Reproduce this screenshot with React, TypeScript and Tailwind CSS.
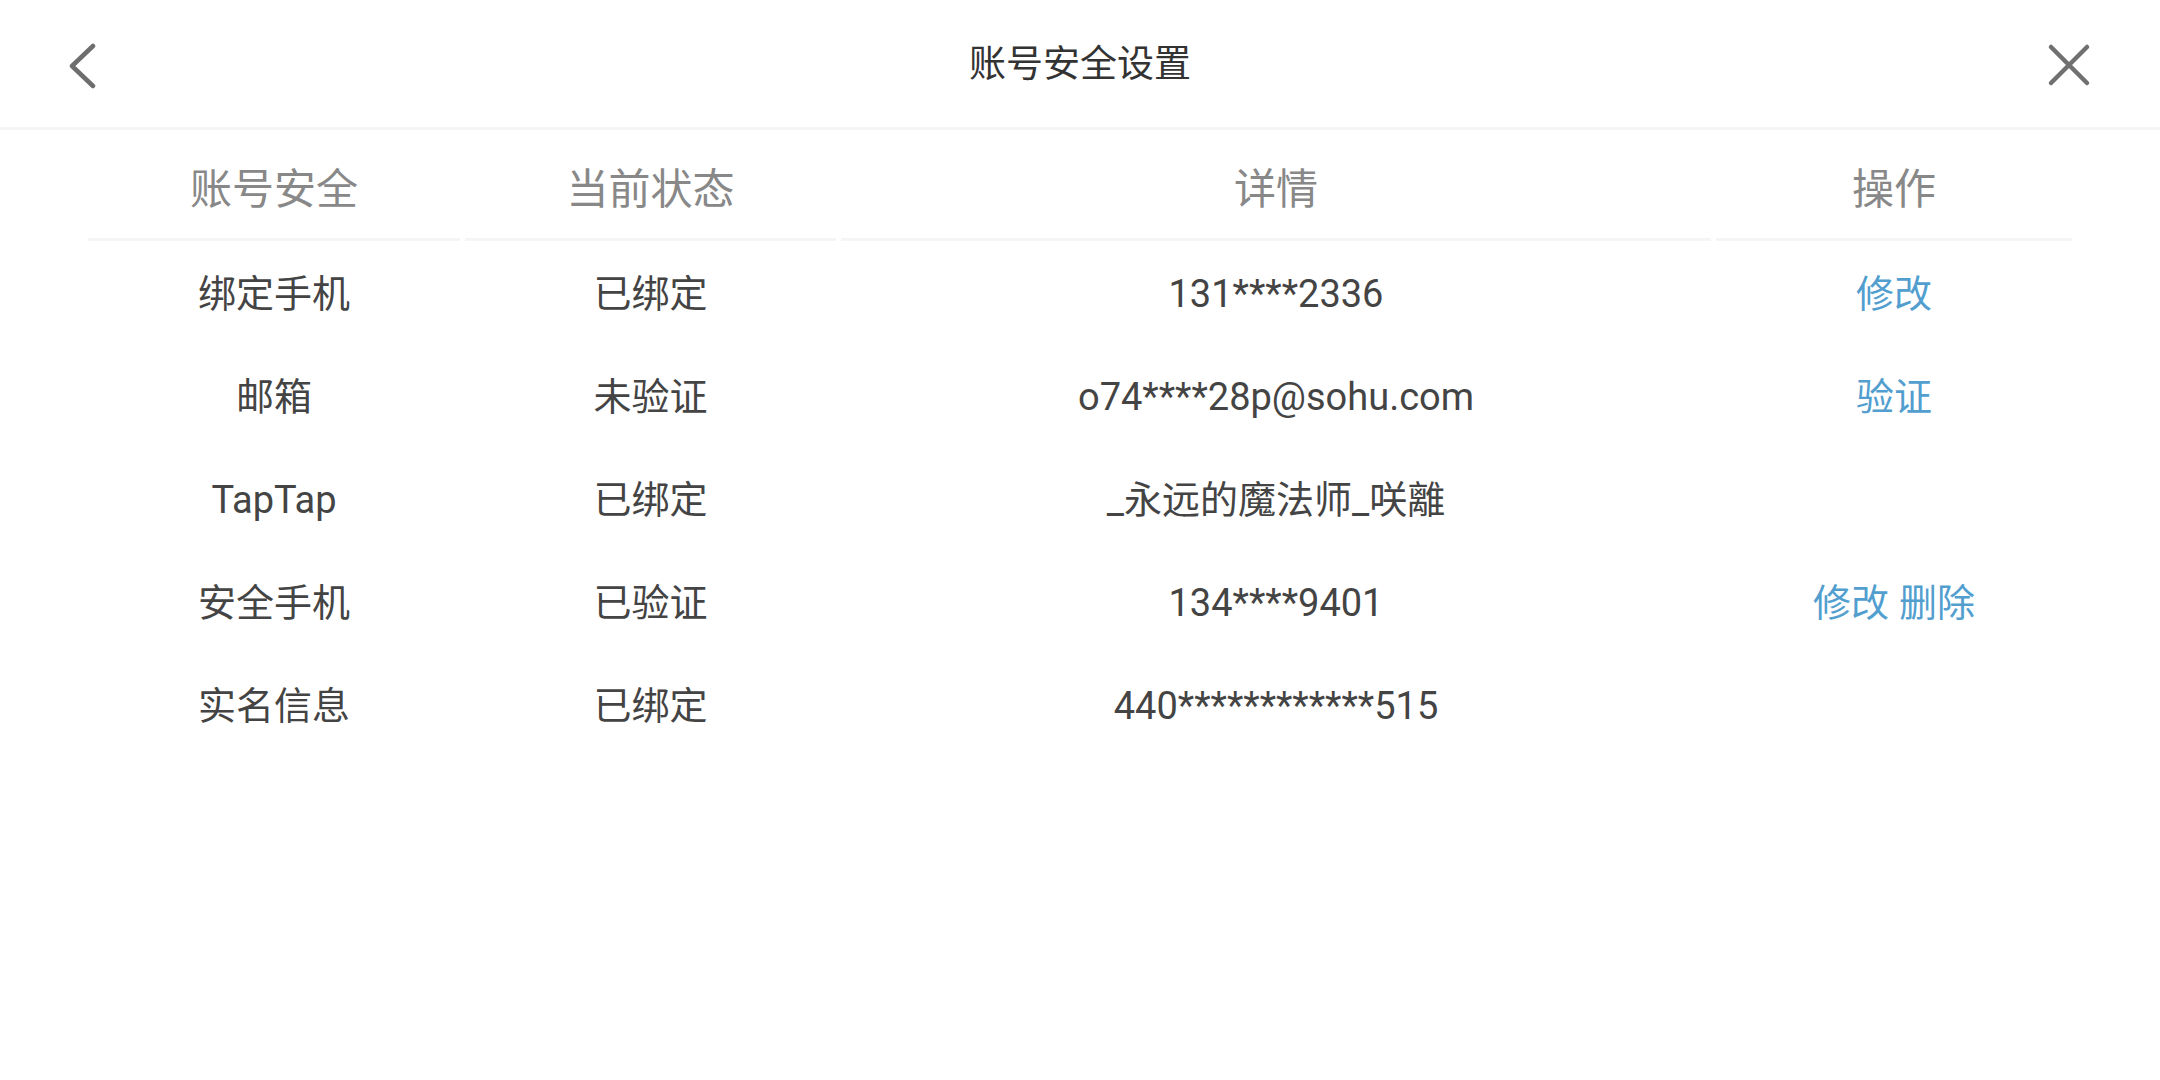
const ROWS = [
  { name: '绑定手机', status: '已绑定', detail: '131****2336', actions: ['修改'] },
  { name: '邮箱', status: '未验证', detail: 'o74****28p@sohu.com', actions: ['验证'] },
  { name: 'TapTap', status: '已绑定', detail: '_永远的魔法师_咲離', actions: [] },
  { name: '安全手机', status: '已验证', detail: '134****9401', actions: ['修改', '删除'] },
  { name: '实名信息', status: '已绑定', detail: '440************515', actions: [] },
]

const HEADERS = ['账号安全', '当前状态', '详情', '操作']

const GRID = 'grid grid-cols-[372px_371px_870px_356px] gap-x-[5px]'

export default function App() {
  return (
    <div
      className="w-[2160px] h-[1080px] bg-white overflow-hidden"
      style={{ fontFamily: 'Roboto, "Noto Sans CJK SC", sans-serif' }}
    >
      {/* Top bar */}
      <div className="h-[130px] pt-[3px] flex items-center border-b-[3px] border-[#f5f5f5]">
        <div className="w-[240px] pl-[68px] flex items-center">
          <svg width="30" height="47" viewBox="0 0 30 47" fill="none">
            <path d="M25 4 L4 24 L25 44" stroke="#6e6e6e" strokeWidth="4.5" strokeLinecap="round" strokeLinejoin="round" />
          </svg>
        </div>
        <div className="flex-1 text-center text-[37px] text-[#333333]">账号安全设置</div>
        <div className="w-[240px] pr-[68px] flex items-center justify-end">
          <svg width="46" height="46" viewBox="0 0 46 46" fill="none">
            <path d="M5 5 L41 41 M41 5 L5 41" stroke="#707070" strokeWidth="4.5" strokeLinecap="round" />
          </svg>
        </div>
      </div>

      {/* Table */}
      <div className="ml-[88px] w-[1984px]">
        <div className={GRID}>
          {HEADERS.map(h => (
            <div key={h} className="h-[111px] pt-[10px] flex items-center justify-center text-[42px] text-[#888888] border-b-[3px] border-[#f5f5f5]">
              {h}
            </div>
          ))}
        </div>
        <div className="mt-[2px]">
          {ROWS.map(r => (
            <div key={r.name} className={`${GRID} h-[103px] items-center text-[38px] text-[#444444]`}>
              <div className="text-center">{r.name}</div>
              <div className="text-center">{r.status}</div>
              <div className="text-center">{r.detail}</div>
              <div className="flex justify-center gap-[10px] text-[#519ecf]">
                {r.actions.map(a => (
                  <span key={a}>{a}</span>
                ))}
              </div>
            </div>
          ))}
        </div>
      </div>
    </div>
  )
}
